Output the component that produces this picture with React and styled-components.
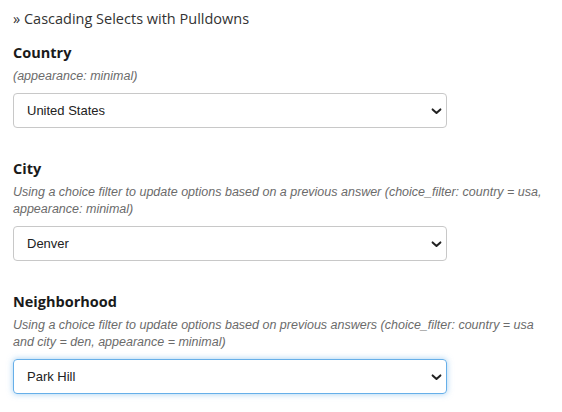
import React from 'react';
import styled, { createGlobalStyle, css } from 'styled-components';

const GlobalStyle = createGlobalStyle`
  body {
    margin: 0;
    background: #fff;
    font-family: 'Open Sans', 'Liberation Sans', sans-serif;
    color: #222;
  }
`;

const Page = styled.div`
  padding: 9px 13px 0;
  width: 434px;
`;

const Heading = styled.div`
  font-size: 14.5px;
  line-height: 20px;
  color: #333;
  margin-bottom: 14px;
`;

const Question = styled.div`
  margin-bottom: 31px;
`;

const Label = styled.div`
  font-size: 14.5px;
  font-weight: 700;
  line-height: 20px;
  color: #1a1a1a;
  margin-bottom: 5px;
`;

const Hint = styled.div`
  font-family: 'Liberation Sans', Arial, sans-serif;
  font-style: italic;
  font-size: 12.5px;
  line-height: 17px;
  color: #6b6b6b;
  width: 540px;
  margin-bottom: 8px;
`;

const SelectWrap = styled.div`
  position: relative;
  height: 35px;
  box-sizing: border-box;
  border: 1px solid #c8c8c8;
  border-radius: 4px;
  display: flex;
  align-items: center;
  padding: 0 13px;
  font-family: 'Liberation Sans', Arial, sans-serif;
  font-size: 13px;
  color: #222;
  ${({ focused }) =>
    focused &&
    css`
      border-color: #66afe9;
      box-shadow: 0 0 6px rgba(102, 175, 233, 0.6);
    `}
`;

const Chevron = styled.svg`
  position: absolute;
  right: 4px;
  top: 50%;
  margin-top: -4px;
  width: 11px;
  height: 8px;
`;

function Select({ value, focused }) {
  return (
    <SelectWrap focused={focused}>
      {value}
      <Chevron viewBox="0 0 11 8">
        <path d="M1.6 2.4 L5.5 6 L9.4 2.4" fill="none" stroke="#222" strokeWidth="2" strokeLinecap="round" strokeLinejoin="round" />
      </Chevron>
    </SelectWrap>
  );
}

const questions = [
  {
    label: 'Country',
    hint: ['(appearance: minimal)'],
    value: 'United States',
  },
  {
    label: 'City',
    hint: [
      'Using a choice filter to update options based on a previous answer (choice_filter: country = usa,',
      'appearance: minimal)',
    ],
    value: 'Denver',
  },
  {
    label: 'Neighborhood',
    hint: [
      'Using a choice filter to update options based on previous answers (choice_filter: country = usa',
      'and city = den, appearance = minimal)',
    ],
    value: 'Park Hill',
    focused: true,
  },
];

export default function App() {
  return (
    <>
      <GlobalStyle />
      <Page>
        <Heading>» Cascading Selects with Pulldowns</Heading>
        {questions.map((q) => (
          <Question key={q.label}>
            <Label>{q.label}</Label>
            <Hint>
              {q.hint.map((line) => (
                <div key={line}>{line}</div>
              ))}
            </Hint>
            <Select value={q.value} focused={q.focused} />
          </Question>
        ))}
      </Page>
    </>
  );
}
